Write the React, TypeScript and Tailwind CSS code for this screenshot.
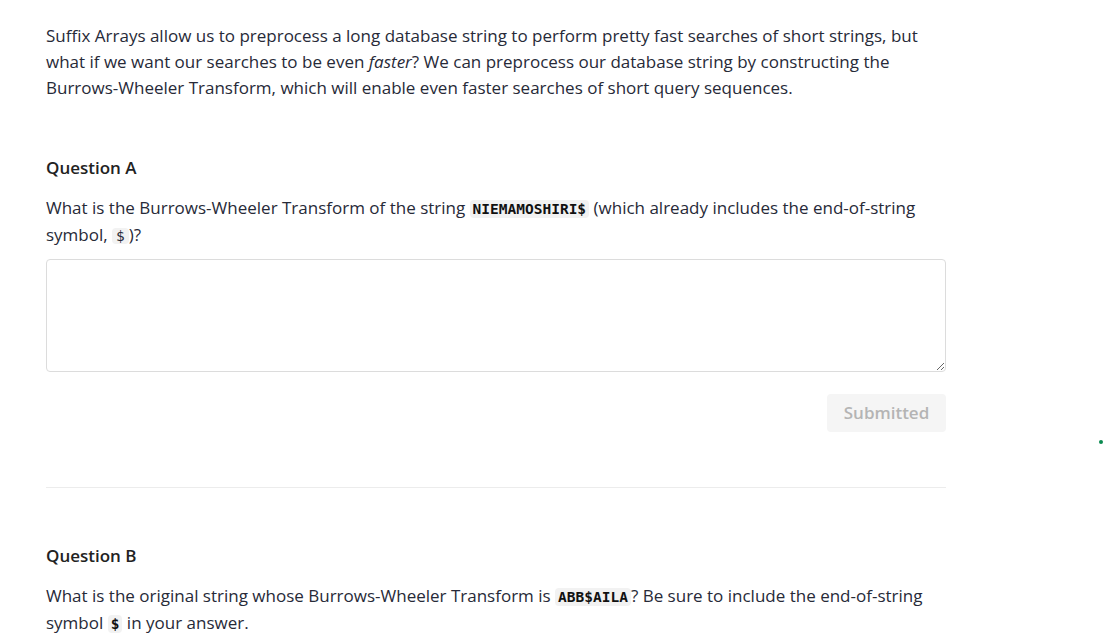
const font = { fontFamily: '"Open Sans", "Noto Sans", sans-serif' };

function Code({ children }: { children: React.ReactNode }) {
  return (
    <code className="rounded bg-[#f2f2f2] px-[3px] py-[1px] font-['DejaVu_Sans_Mono',monospace] text-[14.5px] font-bold text-[#111]">
      {children}
    </code>
  );
}

export default function App() {
  return (
    <div
      className="relative min-h-[642px] w-[1103px] bg-white text-[17px] leading-[26px] text-[#272a38]"
      style={font}
    >
      <div className="ml-[46px] w-[900px] pt-[23px]">
        <p>
          Suffix Arrays allow us to preprocess a long database string to perform pretty fast searches of short strings, but
          what if we want our searches to be even <em>faster</em>? We can preprocess our database string by constructing the
          Burrows-Wheeler Transform, which will enable even faster searches of short query sequences.
        </p>

        <h3 className="mt-[54px] font-semibold text-[#222]">Question A</h3>
        <p className="mt-[14px]">
          What is the Burrows-Wheeler Transform of the string <Code>NIEMAMOSHIRI$</Code> (which already includes the
          end-of-string symbol, <code className="rounded bg-[#f2f2f2] px-[4px] font-['DejaVu_Sans_Mono',monospace] text-[14.5px]">$</code>)?
        </p>
        <textarea className="mt-[10px] block h-[113px] w-[900px] rounded border border-[#dcdcdc] bg-white p-2" />
        <div className="mt-[22px] flex justify-end">
          <button className="h-[38px] w-[119px] rounded bg-[#f5f5f5] text-[17px] font-semibold text-[#b4b4b4]">
            Submitted
          </button>
        </div>
        <hr className="mt-[55px] border-t border-[#ececec]" />

        <h3 className="mt-[55px] font-semibold text-[#222]">Question B</h3>
        <p className="mt-[14px]">
          What is the original string whose Burrows-Wheeler Transform is <Code>ABB$AILA</Code>? Be sure to include the
          end-of-string symbol <Code>$</Code> in your answer.
        </p>
      </div>
      <div className="absolute left-[1099px] top-[440px] h-[4px] w-[4px] rounded-full bg-[#0a8a50]" />
    </div>
  );
}
